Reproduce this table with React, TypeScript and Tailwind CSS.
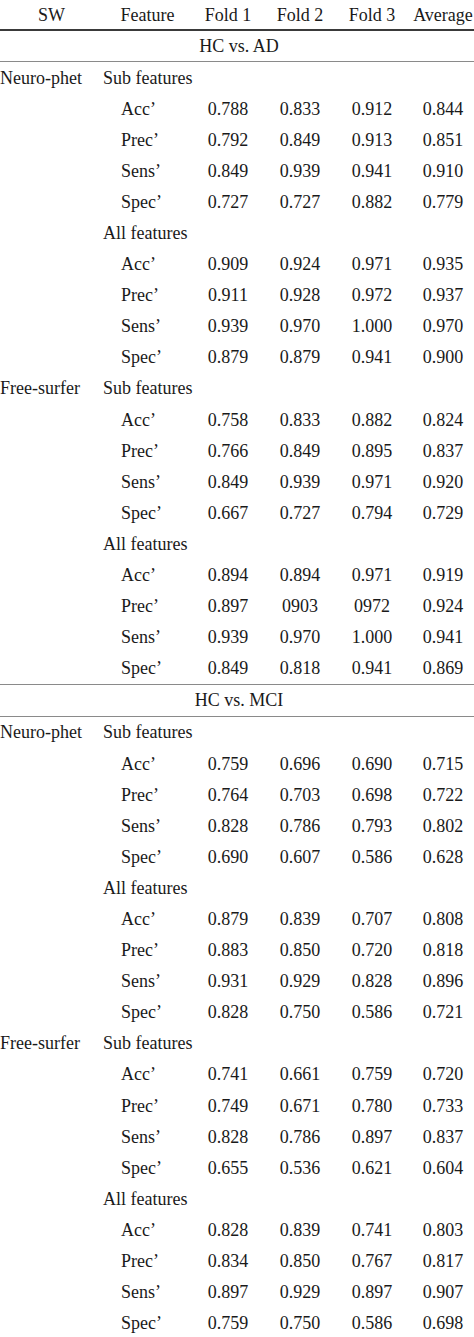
import React from "react";

type Row = { sw?: string; group?: string; metric?: string; vals?: string[] };

const metrics = ["Acc’", "Prec’", "Sens’", "Spec’"];

function block(sw: string, sub: string[][], all: string[][]): Row[] {
  const rows: Row[] = [];
  rows.push({ sw, group: "Sub features" });
  sub.forEach((v, i) => rows.push({ metric: metrics[i], vals: v }));
  rows.push({ group: "All features" });
  all.forEach((v, i) => rows.push({ metric: metrics[i], vals: v }));
  return rows;
}

const sectionAD: Row[] = [
  ...block(
    "Neuro-phet",
    [
      ["0.788", "0.833", "0.912", "0.844"],
      ["0.792", "0.849", "0.913", "0.851"],
      ["0.849", "0.939", "0.941", "0.910"],
      ["0.727", "0.727", "0.882", "0.779"],
    ],
    [
      ["0.909", "0.924", "0.971", "0.935"],
      ["0.911", "0.928", "0.972", "0.937"],
      ["0.939", "0.970", "1.000", "0.970"],
      ["0.879", "0.879", "0.941", "0.900"],
    ]
  ),
  ...block(
    "Free-surfer",
    [
      ["0.758", "0.833", "0.882", "0.824"],
      ["0.766", "0.849", "0.895", "0.837"],
      ["0.849", "0.939", "0.971", "0.920"],
      ["0.667", "0.727", "0.794", "0.729"],
    ],
    [
      ["0.894", "0.894", "0.971", "0.919"],
      ["0.897", "0903", "0972", "0.924"],
      ["0.939", "0.970", "1.000", "0.941"],
      ["0.849", "0.818", "0.941", "0.869"],
    ]
  ),
];

const sectionMCI: Row[] = [
  ...block(
    "Neuro-phet",
    [
      ["0.759", "0.696", "0.690", "0.715"],
      ["0.764", "0.703", "0.698", "0.722"],
      ["0.828", "0.786", "0.793", "0.802"],
      ["0.690", "0.607", "0.586", "0.628"],
    ],
    [
      ["0.879", "0.839", "0.707", "0.808"],
      ["0.883", "0.850", "0.720", "0.818"],
      ["0.931", "0.929", "0.828", "0.896"],
      ["0.828", "0.750", "0.586", "0.721"],
    ]
  ),
  ...block(
    "Free-surfer",
    [
      ["0.741", "0.661", "0.759", "0.720"],
      ["0.749", "0.671", "0.780", "0.733"],
      ["0.828", "0.786", "0.897", "0.837"],
      ["0.655", "0.536", "0.621", "0.604"],
    ],
    [
      ["0.828", "0.839", "0.741", "0.803"],
      ["0.834", "0.850", "0.767", "0.817"],
      ["0.897", "0.929", "0.897", "0.907"],
      ["0.759", "0.750", "0.586", "0.698"],
    ]
  ),
];

const cols = "grid grid-cols-[103px_89px_72px_72px_72px_70px]";

function DataRow({ r }: { r: Row }) {
  return (
    <div className={`${cols} h-[31.1px] items-center`}>
      <div className="whitespace-nowrap">{r.sw ?? ""}</div>
      <div className="whitespace-nowrap">
        {r.group ? r.group : <span className="pl-[18px]">{r.metric}</span>}
      </div>
      {[0, 1, 2, 3].map((i) => (
        <div key={i} className="text-center whitespace-nowrap">
          {r.vals ? r.vals[i] : ""}
        </div>
      ))}
    </div>
  );
}

export default function App() {
  return (
    <div className="w-[474px] h-[1337px] overflow-hidden bg-white text-[#1a1a1a] text-[18px] leading-none font-['Liberation_Serif','DejaVu_Serif',serif]">
      <div className="w-[478px]">
        <div className={`${cols} h-[29px] items-center`}>
          <div className="text-center">SW</div>
          <div className="text-center">Feature</div>
          <div className="text-center">Fold 1</div>
          <div className="text-center">Fold 2</div>
          <div className="text-center">Fold 3</div>
          <div className="text-center whitespace-nowrap">Average</div>
        </div>
        <div className="h-[2px] bg-[#3a3a3a]" />
        <div className="h-[30px] flex items-center justify-center">HC vs. AD</div>
        <div className="h-px bg-[#8a8a8a]" />
        {sectionAD.map((r, i) => (
          <DataRow key={"a" + i} r={r} />
        ))}
        <div className="h-px bg-[#8a8a8a]" />
        <div className="h-[31px] flex items-center justify-center">HC vs. MCI</div>
        <div className="h-px bg-[#8a8a8a]" />
        {sectionMCI.map((r, i) => (
          <DataRow key={"m" + i} r={r} />
        ))}
      </div>
    </div>
  );
}
